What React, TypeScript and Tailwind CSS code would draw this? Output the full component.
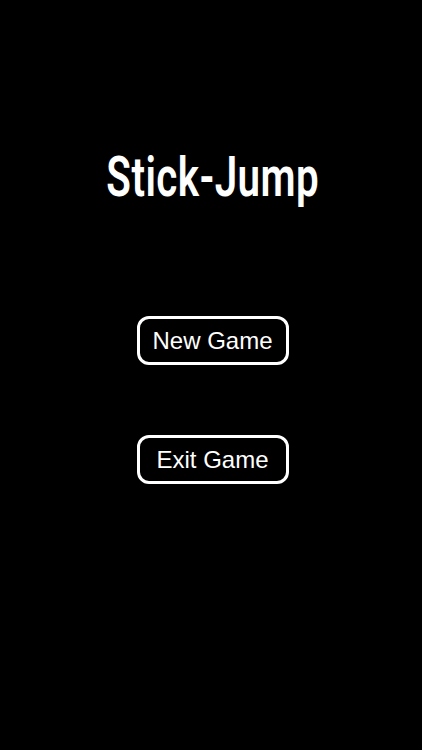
export default function App() {
  return (
    <div className="flex h-[750px] w-full flex-col items-center bg-black pl-[3px] text-white">
      <h1 className="mt-[145px] origin-center scale-x-[0.72] font-['Roboto',sans-serif] text-[56px] leading-[64px] font-semibold tracking-[0.6px]">
        Stick-Jump
      </h1>
      <div className="mt-[107px] flex flex-col items-center gap-[70px]">
        <button className="h-[49px] w-[152px] rounded-[12px] border-[3px] border-white font-['Liberation_Sans',Arial,sans-serif] text-[24px] text-white">
          New Game
        </button>
        <button className="h-[49px] w-[152px] rounded-[12px] border-[3px] border-white font-['Liberation_Sans',Arial,sans-serif] text-[24px] text-white">
          Exit Game
        </button>
      </div>
    </div>
  );
}
